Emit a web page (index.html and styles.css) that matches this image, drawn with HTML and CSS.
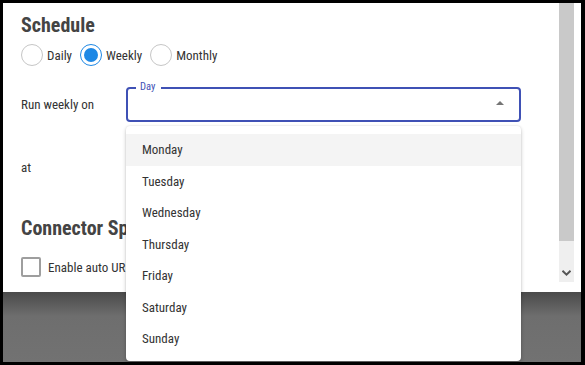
FILE: index.html
```html
<!DOCTYPE html>
<html lang="en">
<head>
    <meta charset="UTF-8">
    <meta name="viewport" content="width=device-width, initial-scale=1.0">
    <title>Schedule</title>
    <link rel="stylesheet" href="styles.css">
</head>
<body>
    <div class="frame">
        <div class="dialog">
            <div class="content">
                <h2 class="section-title">Schedule</h2>

                <div class="radio-group">
                    <label class="radio"><span class="radio-dot"></span>Daily</label>
                    <label class="radio checked"><span class="radio-dot"></span>Weekly</label>
                    <label class="radio"><span class="radio-dot"></span>Monthly</label>
                </div>

                <div class="form-row first-row">
                    <span class="row-label">Run weekly on</span>
                    <div class="select-field focused">
                        <span class="field-label">Day</span>
                        <span class="select-arrow"></span>
                    </div>
                </div>

                <div class="form-row">
                    <span class="row-label">at</span>
                </div>

                <h2 class="section-title connector">Connector Specific Settings</h2>

                <label class="checkbox"><span class="checkbox-box"></span>Enable auto URL generation</label>
            </div>

            <!-- fake scrollbar of the dialog body -->
            <div class="scrollbar">
                <div class="scroll-thumb"></div>
                <div class="scroll-track">
                    <svg class="scroll-down" width="9" height="6" viewBox="0 0 9 6">
                        <path d="M0.5 0.8 L4.5 4.6 L8.5 0.8" fill="none" stroke="#555" stroke-width="2"/>
                    </svg>
                </div>
            </div>
        </div>
        <div class="backdrop"></div>

        <!-- open dropdown for the Day select -->
        <ul class="menu">
            <li class="menu-item active">Monday</li>
            <li class="menu-item">Tuesday</li>
            <li class="menu-item">Wednesday</li>
            <li class="menu-item">Thursday</li>
            <li class="menu-item">Friday</li>
            <li class="menu-item">Saturday</li>
            <li class="menu-item">Sunday</li>
        </ul>
    </div>
</body>
</html>
```

FILE: styles.css
```css
body {
    margin: 0;
    background-color: #000;
    font-family: "Roboto Condensed", Roboto, sans-serif;
    color: #333;
}

.frame {
    position: relative;
    width: 585px;
    height: 365px;
    padding: 3px 4px 3px 3px;
    box-sizing: border-box;
    display: flex;
    flex-direction: column;
}

.dialog {
    height: 289px;
    background: #fff;
    display: flex;
    overflow: hidden;
}

.content {
    flex: 1;
    padding: 10px 0 0 18px;
    overflow: hidden;
    white-space: nowrap;
}

.section-title {
    margin: 0;
    font-size: 20px;
    line-height: 24px;
    font-weight: bold;
    color: #444;
}

.section-title.connector {
    margin-top: 31px;
}

.radio-group {
    display: flex;
    margin-top: 7px;
    height: 22px;
}

.radio {
    display: flex;
    align-items: center;
    font-size: 13px;
    margin-right: 8px;
}

.radio-dot {
    width: 22px;
    height: 22px;
    box-sizing: border-box;
    border: 1px solid #c6c6c6;
    border-radius: 50%;
    margin-right: 4px;
    position: relative;
}

.radio.checked .radio-dot {
    border: 1.5px solid #1e88e5;
}

.radio.checked .radio-dot::after {
    content: "";
    position: absolute;
    left: 2.5px;
    top: 2.5px;
    width: 14px;
    height: 14px;
    border-radius: 50%;
    background: #1e88e5;
}

.form-row {
    display: flex;
    align-items: center;
    height: 35px;
    margin-top: 28px;
    font-size: 13px;
}

.form-row.first-row {
    margin-top: 21px;
}

.row-label {
    width: 105px;
}

.select-field {
    position: relative;
    width: 395px;
    height: 35px;
    box-sizing: border-box;
    border: 2px solid #3f51b5;
    border-radius: 4px;
}

.field-label {
    position: absolute;
    left: 8px;
    top: -9px;
    padding: 0 6px 0 4px;
    background: #fff;
    font-size: 10.5px;
    line-height: 14px;
    color: #3f51b5;
}

.select-arrow {
    position: absolute;
    right: 15px;
    top: 12px;
    border-left: 4px solid transparent;
    border-right: 4px solid transparent;
    border-bottom: 4px solid #757575;
}

.checkbox {
    display: flex;
    align-items: center;
    margin-top: 17px;
    font-size: 13px;
}

.checkbox-box {
    width: 20px;
    height: 20px;
    box-sizing: border-box;
    border: 2px solid #9e9e9e;
    border-radius: 2px;
    margin-right: 7px;
}

.scrollbar {
    width: 15px;
    height: 279px;
    margin-right: 7px;
    display: flex;
    flex-direction: column;
}

.scroll-thumb {
    height: 238px;
    background: #c9c9c9;
}

.scroll-track {
    flex: 1;
    background: #efefef;
    display: flex;
    align-items: flex-end;
    justify-content: center;
    padding-bottom: 6px;
}

.backdrop {
    flex: 1;
    background: linear-gradient(#4a4a4a, #6e6e6e 24px, #727272);
}

.menu {
    position: absolute;
    left: 126px;
    top: 126px;
    width: 395px;
    height: 235px;
    margin: 0;
    padding: 8px 0 0;
    box-sizing: border-box;
    list-style: none;
    background: #fff;
    border-radius: 4px;
    box-shadow: 0 2px 4px rgba(0, 0, 0, 0.2), 0 0 2px rgba(0, 0, 0, 0.12);
}

.menu-item {
    height: 31.5px;
    line-height: 31.5px;
    padding-left: 16px;
    font-size: 13px;
    color: #333;
}

.menu-item.active {
    background: #f4f4f4;
}
```
